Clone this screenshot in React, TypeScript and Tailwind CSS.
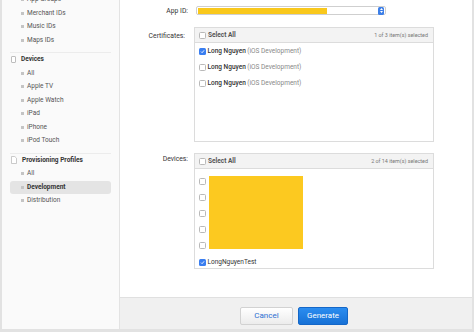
import React from "react"

const Check = ({ on }: { on?: boolean }) =>
  on ? (
    <span className="flex h-[7px] w-[7px] shrink-0 items-center justify-center rounded-[1.5px] bg-[#3a7ef0]">
      <svg width="5" height="5" viewBox="0 0 10 10">
        <path d="M2 5.2 L4.2 7.4 L8.2 2.6" fill="none" stroke="white" strokeWidth="1.8" />
      </svg>
    </span>
  ) : (
    <span className="block h-[7px] w-[7px] shrink-0 rounded-[1.5px] border border-[#b9b9b9] bg-white" />
  )

const Item = ({ label, active }: { label: string; active?: boolean }) => (
  <div
    className={`mx-[8px] flex h-[13.5px] items-center gap-[3px] rounded-[3px] pl-[11px] ${
      active ? "bg-[#e4e4e4] font-bold text-[#333]" : "text-[#555]"
    }`}
  >
    <span className="h-[3px] w-[3px] bg-[#c4c4c4]" />
    <span className="pt-[1px]">{label}</span>
  </div>
)

const Header = ({ label, icon }: { label: string; icon: React.ReactNode }) => (
  <div className="flex h-[13.5px] items-center gap-[5px] pl-[9px] font-bold text-[#333]">
    {icon}
    <span className="pt-[1px]">{label}</span>
  </div>
)

const Sidebar = () => (
  <aside className="w-[118px] shrink-0 border-r border-[#e3e3e3] bg-[#fafafa] text-[6.5px]">
    <div className="-mt-[7px]">
      <Item label="App Groups" />
      <Item label="Merchant IDs" />
      <Item label="Music IDs" />
      <Item label="Maps IDs" />
    </div>
    <div className="mx-[8px] mt-[5px] border-t border-[#ececec]" />
    <Header
      label="Devices"
      icon={<span className="block h-[7px] w-[5px] rounded-[1px] border border-[#bdbdbd] bg-white" />}
    />
    {["All", "Apple TV", "Apple Watch", "iPad", "iPhone", "iPod Touch"].map((d) => (
      <Item key={d} label={d} />
    ))}
    <div className="mx-[8px] mt-[5px] border-t border-[#ececec]" />
    <Header
      label="Provisioning Profiles"
      icon={
        <svg width="6" height="8" viewBox="0 0 6 8">
          <path d="M0.5 0.5 H3.8 L5.5 2.2 V7.5 H0.5 Z" fill="white" stroke="#bdbdbd" strokeWidth="0.8" />
        </svg>
      }
    />
    <Item label="All" />
    <Item label="Development" active />
    <Item label="Distribution" />
  </aside>
)

const BoxHeader = ({ count }: { count: string }) => (
  <div className="flex h-[15px] items-center justify-between border-b border-[#dcdcdc] bg-[#f3f3f3] pl-[4px] pr-[5px]">
    <div className="flex items-center gap-[2px]">
      <Check />
      <span className="pt-[1px] text-[6.5px] font-bold text-[#555]">Select All</span>
    </div>
    <span className="pt-[1px] text-[5.4px] text-[#777]">{count}</span>
  </div>
)

const Cert = ({ on }: { on?: boolean }) => (
  <div className="flex h-[16px] items-center gap-[1.5px] pl-[4px] text-[6.5px]">
    <Check on={on} />
    <span className="pt-[1px] font-medium text-[#333]">Long Nguyen</span>
    <span className="pt-[1px] text-[#888]">(iOS Development)</span>
  </div>
)

const App = () => {
  return (
    <div className="flex h-[332px] w-[474px] overflow-hidden bg-[#e2e2e2] pb-[3px] pl-[2px] pr-[2px] font-['Roboto','Liberation_Sans',Arial,sans-serif]">
      <Sidebar />
      <main className="flex flex-1 flex-col bg-white">
        <div className="flex-1 pt-[6px] text-[6.8px]">
          <div className="flex h-[9px] items-center">
            <span className="w-[68px] pt-[1px] text-right text-[#333]">App ID:</span>
            <div className="ml-[8px] flex h-[9px] w-[190px] items-center justify-between rounded-[2px] border border-[#cfcfcf] bg-white pr-[1px]">
              <span className="ml-[1px] h-[6px] w-[129px] bg-[#f9c81c]" />
              <span className="flex h-[8px] w-[6px] flex-col items-center justify-center gap-[1px] rounded-[1.5px] bg-[#3d7fe8]">
                <svg width="3" height="2" viewBox="0 0 3 2"><path d="M0 2 L1.5 0 L3 2 Z" fill="white" /></svg>
                <svg width="3" height="2" viewBox="0 0 3 2"><path d="M0 0 L1.5 2 L3 0 Z" fill="white" /></svg>
              </span>
            </div>
          </div>

          <div className="mt-[12px] flex">
            <span className="mt-[4px] w-[65px] text-right text-[#333]">Certificates:</span>
            <div className="ml-[9px] h-[115px] w-[240px] border border-[#dcdcdc] bg-white">
              <BoxHeader count="1 of 3 item(s) selected" />
              <Cert on />
              <Cert />
              <Cert />
            </div>
          </div>

          <div className="mt-[11px] flex">
            <span className="mt-[1px] w-[68px] text-right text-[#333]">Devices:</span>
            <div className="ml-[6px] h-[116px] w-[240px] border border-[#dcdcdc] bg-white">
              <BoxHeader count="2 of 14 item(s) selected" />
              <div className="flex gap-[3px] pl-[4px] pt-[4px]">
                <div className="flex flex-col">
                  {[0, 1, 2, 3, 4].map((i) => (
                    <div key={i} className="flex h-[16px] items-center">
                      <Check />
                    </div>
                  ))}
                </div>
                <div className="mt-[3px] h-[73px] w-[94px] bg-[#fcc920]" />
              </div>
              <div className="mt-[1px] flex h-[16px] items-center gap-[1.5px] pl-[4px] text-[6.5px] text-[#333]">
                <Check on />
                <span className="pt-[1px]">LongNguyenTest</span>
              </div>
            </div>
          </div>
        </div>

        <footer className="flex h-[32px] items-center justify-center gap-[5px] border-t border-[#e0e0e0] bg-[#f0f0f0] pr-[4px] pt-[5px] text-[8px]">
          <button className="h-[18px] w-[53px] rounded-[2px] border border-[#d2d2d2] bg-gradient-to-b from-white to-[#ececec] text-[#2d6fd2]">
            Cancel
          </button>
          <button className="h-[18px] w-[50px] rounded-[2px] border border-[#1467c8] bg-gradient-to-b from-[#2b8df0] to-[#1771d6] text-white">
            Generate
          </button>
        </footer>
      </main>
    </div>
  )
}

export default App
